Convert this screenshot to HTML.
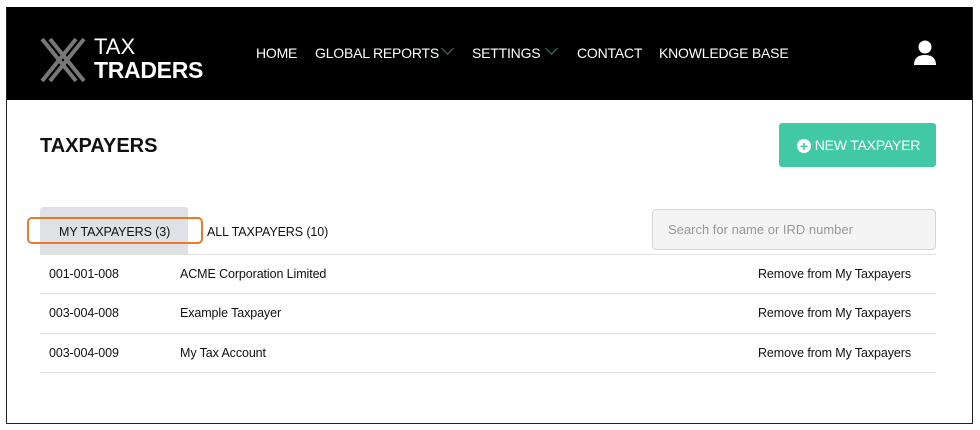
<!DOCTYPE html>
<html><head><style>
*{margin:0;padding:0;box-sizing:border-box}
body{width:980px;height:430px;background:#fff;font-family:"Liberation Sans",sans-serif;position:relative;overflow:hidden}
.frame{position:absolute;left:6px;top:7px;width:967px;height:417px;border:1px solid #222;border-top:none}
.hdr{position:absolute;left:6px;top:7px;width:967px;height:93px;background:#000}
.nav{position:absolute;top:45px;color:#fff;font-size:14px;white-space:nowrap;letter-spacing:-0.2px}
.chev{position:absolute;top:44px;width:9px;height:9px;border-right:1.5px solid #2a8a68;border-bottom:1.5px solid #2a8a68;transform:rotate(45deg)}
.t{position:absolute;font-size:12.5px;color:#111;white-space:nowrap;letter-spacing:-0.1px}
.line{position:absolute;left:40px;width:896px;height:1px;background:#e2e2e2}
</style></head><body>
<div class="hdr"></div>
<div class="frame"></div>
<svg style="position:absolute;left:40px;top:38px" width="46" height="44" viewBox="0 0 46 44">
<g stroke="#777" stroke-width="4"><line x1="2" y1="1" x2="36" y2="43"/><line x1="10" y1="1" x2="44" y2="43"/><line x1="36" y1="1" x2="2" y2="43"/><line x1="44" y1="1" x2="10" y2="43"/></g></svg>
<div style="position:absolute;left:94px;top:36px;color:#fff;font-size:22px;line-height:22px">TAX</div>
<div style="position:absolute;left:94px;top:57px;color:#fff;font-size:23px;font-weight:bold;line-height:26px;letter-spacing:-0.3px">TRADERS</div>
<div class="nav" style="left:256px">HOME</div>
<div class="nav" style="left:315px">GLOBAL REPORTS</div>
<div class="chev" style="left:443px"></div>
<div class="nav" style="left:472px">SETTINGS</div>
<div class="chev" style="left:547px"></div>
<div class="nav" style="left:577px">CONTACT</div>
<div class="nav" style="left:659px">KNOWLEDGE BASE</div>
<svg style="position:absolute;left:913px;top:40px" width="24" height="26" viewBox="0 0 24 26"><circle cx="12" cy="7" r="6.5" fill="#fff"/><path d="M1 25 Q1 15 12 15 Q23 15 23 25Z" fill="#fff"/></svg>
<div style="position:absolute;left:40px;top:135px;font-size:20px;font-weight:bold;color:#111">TAXPAYERS</div>
<div style="position:absolute;left:779px;top:123px;width:157px;height:44px;background:#41c8a5;border-radius:3px;color:#fff;font-size:14px;line-height:44px;padding-left:18px;letter-spacing:-0.2px;white-space:nowrap">
<span style="display:inline-block;width:14px;height:14px;border-radius:50%;background:#fff;color:#41c8a5;font-size:14px;font-weight:bold;line-height:14px;text-align:center;vertical-align:-1px">+</span> NEW TAXPAYER</div>
<div style="position:absolute;left:40px;top:207px;width:148px;height:48px;background:#dfe1e5;border-radius:3px 3px 0 0"></div>
<div style="position:absolute;left:27px;top:217px;width:176px;height:27px;border:2px solid #e87a2e;border-radius:5px"></div>
<div class="t" style="left:59px;top:225px">MY TAXPAYERS (3)</div>
<div class="t" style="left:207px;top:225px">ALL TAXPAYERS (10)</div>
<div style="position:absolute;left:652px;top:209px;width:284px;height:41px;background:#f4f4f4;border:1px solid #d4d4d4;border-radius:4px;color:#999;font-size:13px;line-height:40px;padding-left:15px">Search for name or IRD number</div>
<div class="line" style="top:254px"></div>
<div class="t" style="left:49px;top:267px">001-001-008</div><div class="t" style="left:180px;top:267px">ACME Corporation Limited</div><div class="t" style="left:758px;top:267px">Remove from My Taxpayers</div>
<div class="line" style="top:293px"></div>
<div class="t" style="left:49px;top:306px">003-004-008</div><div class="t" style="left:180px;top:306px">Example Taxpayer</div><div class="t" style="left:758px;top:306px">Remove from My Taxpayers</div>
<div class="line" style="top:333px"></div>
<div class="t" style="left:49px;top:346px">003-004-009</div><div class="t" style="left:180px;top:346px">My Tax Account</div><div class="t" style="left:758px;top:346px">Remove from My Taxpayers</div>
<div class="line" style="top:372px"></div>
</body></html>
